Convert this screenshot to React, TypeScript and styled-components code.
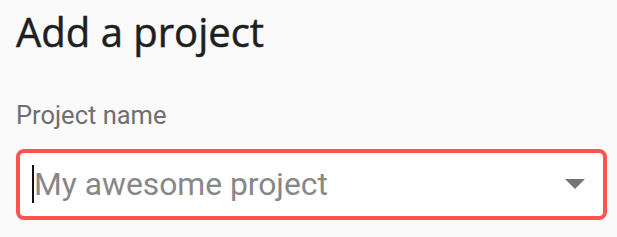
import React from "react";
import styled, { createGlobalStyle } from "styled-components";

const Global = createGlobalStyle`
  html, body { margin: 0; padding: 0; background: #fafafa; }
  body { width: 617px; height: 237px; overflow: hidden; }
`;

const Page = styled.div`
  display: flex;
  flex-direction: column;
  padding: 8px 10px 0 16px;
  width: 617px;
  box-sizing: border-box;
`;

const Title = styled.h1`
  margin: 0;
  font-family: "Open Sans", sans-serif;
  font-weight: 500;
  font-size: 40px;
  line-height: 48px;
  color: #1f1f1f;
  letter-spacing: 0;
  -webkit-text-stroke: 0.5px #1f1f1f;
`;

const Label = styled.label`
  margin-top: 43.5px;
  font-family: Roboto, sans-serif;
  font-size: 25.5px;
  line-height: 30px;
  color: #6f6f6f;
`;

const Field = styled.div`
  margin-top: 19px;
  width: 591px;
  height: 71px;
  box-sizing: border-box;
  border: 4px solid #ff5252;
  border-radius: 8px;
  background: #fff;
  display: flex;
  align-items: center;
  padding: 0 18px 0 12px;
`;

const Input = styled.input`
  flex: 1;
  min-width: 0;
  border: none;
  outline: none;
  background: transparent;
  font-family: Roboto, sans-serif;
  font-size: 31.8px;
  color: #202124;
  padding: 0;
  &::placeholder { color: #878787; }
`;

const Caret = styled.span`
  width: 2px;
  height: 38px;
  background: #111;
  flex: none;
`;

const Arrow = styled.span`
  width: 0;
  height: 0;
  border-left: 10px solid transparent;
  border-right: 10px solid transparent;
  border-top: 10px solid #757575;
  flex: none;
`;

export default function App() {
  return (
    <>
      <Global />
      <Page>
        <Title>Add a project</Title>
        <Label>Project name</Label>
        <Field>
          <Caret />
          <Input placeholder="My awesome project" readOnly />
          <Arrow />
        </Field>
      </Page>
    </>
  );
}
